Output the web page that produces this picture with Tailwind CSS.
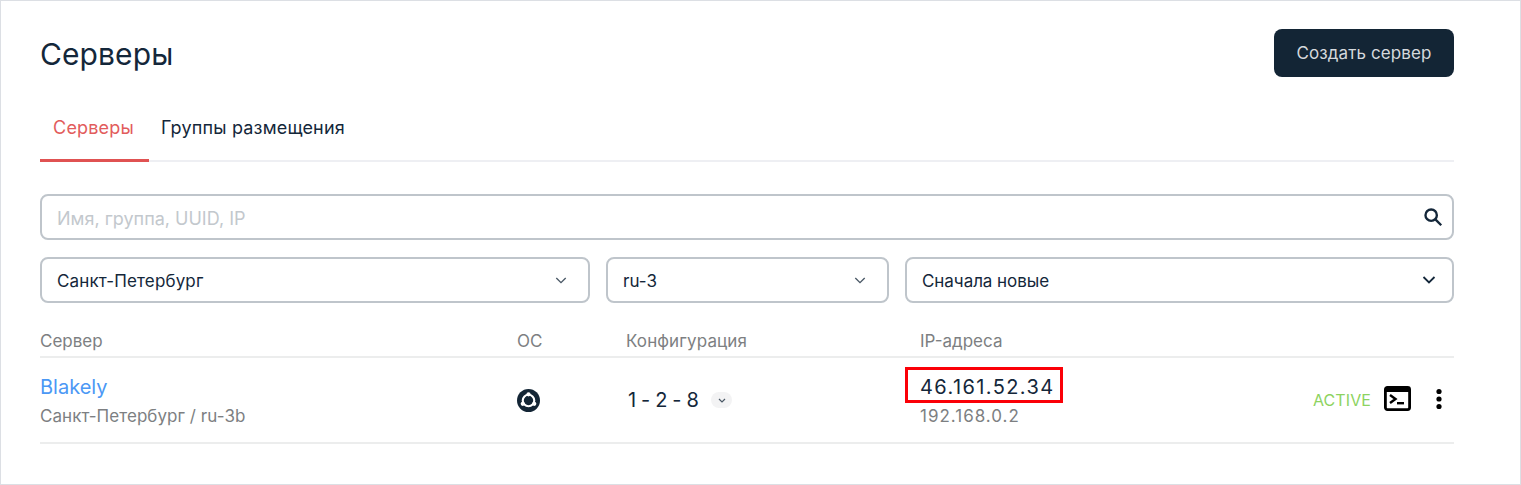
<!DOCTYPE html>
<html lang="ru">
<head>
    <meta charset="UTF-8">
    <title>Серверы</title>
    <script src="https://cdn.jsdelivr.net/npm/@tailwindcss/browser@4"></script>
</head>
<body class="bg-white font-['Inter',sans-serif] text-[#14273a]">
    <div class="h-[485px] w-[1521px] overflow-hidden border border-[#dcdfe4] px-[39px] pr-[66px]">

        <!-- шапка -->
        <div class="flex h-[76px] items-end justify-between">
            <h1 class="pb-[3px] text-[30px] leading-[40px] font-normal tracking-[0.1px]">Серверы</h1>
            <button class="h-[48px] w-[180px] rounded-lg bg-[#132535] pt-[2px] text-[17px] tracking-[0.1px] text-[#d5d9dd]">Создать сервер</button>
        </div>

        <!-- вкладки -->
        <div class="mt-[26px] flex h-[59px] border-b-2 border-[#eeeff3] text-[18px] tracking-[0.18px]">
            <div class="-mb-[2px] flex h-[59px] w-[109px] justify-center border-b-[3px] border-[#e05252] pt-[11px] pr-[2px] text-[#e25c5c]">Серверы</div>
            <div class="pt-[11px] pl-[12px]">Группы размещения</div>
        </div>

        <!-- поиск -->
        <div class="mt-[32px] flex h-[46px] items-center justify-between rounded-lg border-2 border-[#bfc5cb] pr-[8px] pl-[15px]">
            <span class="pt-[2px] text-[18px] text-[#c3c8cd]">Имя, группа, UUID, IP</span>
            <svg width="22" height="22" viewBox="0 0 24 24" fill="none" stroke="#14273a" stroke-width="2.6">
                <circle cx="10" cy="10" r="6.2"/>
                <path d="M14.6 14.6 21 21"/>
            </svg>
        </div>

        <!-- фильтры -->
        <div class="mt-[17px] flex h-[46px] gap-4 text-[17px]">
            <div class="flex w-[550px] items-center justify-between rounded-lg border-2 border-[#bfc5cb] pr-[21px] pl-[15px]">
                <span class="pt-[3px] tracking-[0.15px]">Санкт-Петербург</span>
                <svg width="12" height="7" viewBox="0 0 14 8" fill="none" stroke="#4a5866" stroke-width="1.6"><path d="M1.5 1 7 6.5 12.500 1"/></svg>
            </div>
            <div class="flex w-[283px] items-center justify-between rounded-lg border-2 border-[#bfc5cb] pr-[21px] pl-[15px]">
                <span class="pt-[3px]">ru-3</span>
                <svg width="12" height="7" viewBox="0 0 14 8" fill="none" stroke="#4a5866" stroke-width="1.6"><path d="M1.5 1 7 6.5 12.500 1"/></svg>
            </div>
            <div class="flex w-[549px] items-center justify-between rounded-lg border-2 border-[#bfc5cb] pr-[16px] pl-[15px]">
                <span class="pt-[3px] tracking-[-0.05px]">Сначала новые</span>
                <svg width="14" height="8" viewBox="0 0 14 8" fill="none" stroke="#14273a" stroke-width="1.8"><path d="M1.5 1 7 6.5 12.500 1"/></svg>
            </div>
        </div>

        <!-- таблица -->
        <div class="mt-[24px] grid h-[31px] grid-cols-[477px_109px_294px_1fr] border-b-2 border-[#eceded] text-[17px] leading-[28px] text-[#7d7f82]">
            <div>Сервер</div>
            <div>ОС</div>
            <div class="tracking-[0.1px]">Конфигурация</div>
            <div>IP-адреса</div>
        </div>
        <div class="grid h-[86px] grid-cols-[477px_109px_294px_1fr] items-center border-b-2 border-[#eceded]">
            <div>
                <div class="text-[20px] leading-[30px] text-[#4b98f5]">Blakely</div>
                <div class="mt-[2px] text-[17px] leading-[24px] tracking-[0.05px] text-[#7d7f82]">Санкт-Петербург / ru-3b</div>
            </div>
            <div>
                <svg width="23" height="23" viewBox="0 0 24 24">
                    <circle cx="12" cy="12" r="12" fill="#132535"/>
                    <circle cx="12" cy="12" r="6" fill="none" stroke="#fff" stroke-width="2.2"/>
                    <circle cx="12" cy="5.500" r="2.2" fill="#fff"/>
                    <circle cx="6" cy="15.500" r="2.2" fill="#fff"/>
                    <circle cx="18" cy="15.500" r="2.2" fill="#fff"/>
                </svg>
            </div>
            <div class="flex items-center pl-[2px]">
                <span class="text-[20px] tracking-[-0.35px] whitespace-pre">1 - 2 - 8</span>
                <span class="ml-[13px] flex h-[16px] w-[21px] items-center justify-center rounded-full bg-[#f3f3f4]">
                    <svg width="8" height="5" viewBox="0 0 8 5" fill="none" stroke="#4a5866" stroke-width="1.2"><path d="M1 1 4 4 7 1"/></svg>
                </span>
            </div>
            <div class="flex items-center justify-between">
                <div class="relative">
                    <div class="text-[20px] leading-[30px] tracking-[1.4px]">46.161.52.34</div>
                    <div class="mt-[2px] text-[17px] leading-[24px] tracking-[1px] text-[#7d7f82]">192.168.0.2</div>
                    <div class="absolute top-[-5px] left-[-15px] h-[36px] w-[158px] border-[3px] border-[#fb0007]"></div>
                </div>
                <div class="flex items-center">
                    <span class="text-[16px] tracking-[0.1px] text-[#8dd35f]">ACTIVE</span>
                    <svg class="mb-[3px] ml-[13px]" width="27" height="25" viewBox="0 0 27 25">
                        <rect x="1.400" y="1.400" width="24.200" height="22.200" rx="2" fill="none" stroke="#000" stroke-width="2.800"/>
                        <rect x="1" y="1" width="25" height="5" fill="#000"/>
                        <path d="M6 9 11.500 13 6 17" fill="none" stroke="#000" stroke-width="2.400"/>
                        <rect x="13" y="16" width="7" height="2.400" fill="#000"/>
                    </svg>
                    <svg class="mb-[3px] ml-[25px] mr-[12px]" width="6" height="22" viewBox="0 0 6 22" fill="#000">
                        <circle cx="3" cy="3.500" r="2.600"/>
                        <circle cx="3" cy="11" r="2.600"/>
                        <circle cx="3" cy="18.500" r="2.600"/>
                    </svg>
                </div>
            </div>
        </div>
    </div>
</body>
</html>
